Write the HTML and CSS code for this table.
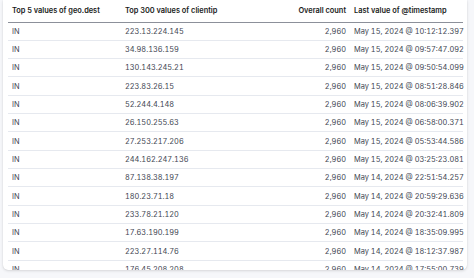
FILE: index.html
```html
<!DOCTYPE html>
<html>
<head>
<meta charset="utf-8">
<link rel="stylesheet" href="styles.css">
</head>
<body>
<div class="page">
  <div class="card">
    <table class="grid">
      <thead>
        <tr>
          <th class="c1">Top 5 values of geo.dest</th>
          <th class="c2">Top 300 values of clientip</th>
          <th class="c3">Overall count</th>
          <th class="c4">Last value of @timestamp</th>
        </tr>
      </thead>
      <tbody>
        <tr><td>IN</td><td>223.13.224.145</td><td class="num">2,960</td><td>May 15, 2024 @ 10:12:12.397</td></tr>
        <tr><td>IN</td><td>34.98.136.159</td><td class="num">2,960</td><td>May 15, 2024 @ 09:57:47.092</td></tr>
        <tr><td>IN</td><td>130.143.245.21</td><td class="num">2,960</td><td>May 15, 2024 @ 09:50:54.099</td></tr>
        <tr><td>IN</td><td>223.83.26.15</td><td class="num">2,960</td><td>May 15, 2024 @ 08:51:28.846</td></tr>
        <tr><td>IN</td><td>52.244.4.148</td><td class="num">2,960</td><td>May 15, 2024 @ 08:06:39.902</td></tr>
        <tr><td>IN</td><td>26.150.255.63</td><td class="num">2,960</td><td>May 15, 2024 @ 06:58:00.371</td></tr>
        <tr><td>IN</td><td>27.253.217.206</td><td class="num">2,960</td><td>May 15, 2024 @ 05:53:44.586</td></tr>
        <tr><td>IN</td><td>244.162.247.136</td><td class="num">2,960</td><td>May 15, 2024 @ 03:25:23.081</td></tr>
        <tr><td>IN</td><td>87.138.38.197</td><td class="num">2,960</td><td>May 14, 2024 @ 22:51:54.257</td></tr>
        <tr><td>IN</td><td>180.23.71.18</td><td class="num">2,960</td><td>May 14, 2024 @ 20:59:29.636</td></tr>
        <tr><td>IN</td><td>233.78.21.120</td><td class="num">2,960</td><td>May 14, 2024 @ 20:32:41.809</td></tr>
        <tr><td>IN</td><td>17.63.190.199</td><td class="num">2,960</td><td>May 14, 2024 @ 18:35:09.995</td></tr>
        <tr><td>IN</td><td>223.27.114.76</td><td class="num">2,960</td><td>May 14, 2024 @ 18:12:37.987</td></tr>
        <tr><td>IN</td><td>176.45.208.208</td><td class="num">2,960</td><td>May 14, 2024 @ 17:55:00.739</td></tr>
      </tbody>
    </table>
  </div>
</div>
</body>
</html>
```

FILE: styles.css
```css
html, body {
  margin: 0;
  padding: 0;
  background: #f6f7fa;
  font-family: Inter, "Liberation Sans", sans-serif;
}
.page {
  padding: 0 7px 0 3px;
  height: 278px;
  box-sizing: border-box;
}
.card {
  background: #fff;
  border-radius: 0 0 5px 5px;
  box-shadow: 0 1px 3px rgba(0,0,0,0.12), 0 0 1px rgba(0,0,0,0.15);
  padding: 0 4px 4px 5px;
  height: 266px;
  overflow: hidden;
}
.grid {
  width: 100%;
  border-collapse: collapse;
  table-layout: fixed;
  font-size: 7.4px;
  color: #414652;
}
.grid th {
  font-weight: 600;
  color: #1a1c21;
  text-align: left;
  height: 22px;
  padding: 0 4px;
  border-bottom: 1px solid #8c909a;
  box-sizing: border-box;
  white-space: nowrap;
}
.grid td {
  height: 18.33px;
  padding: 0 4px;
  border-bottom: 1px solid #e6e9ef;
  box-sizing: border-box;
  white-space: nowrap;
  font-variant-numeric: tabular-nums;
}
.grid .c1 { width: 113px; }
.grid .c2 { width: 140px; }
.grid .c3 { width: 89px; text-align: right; }
.grid .num { text-align: right; }
```
